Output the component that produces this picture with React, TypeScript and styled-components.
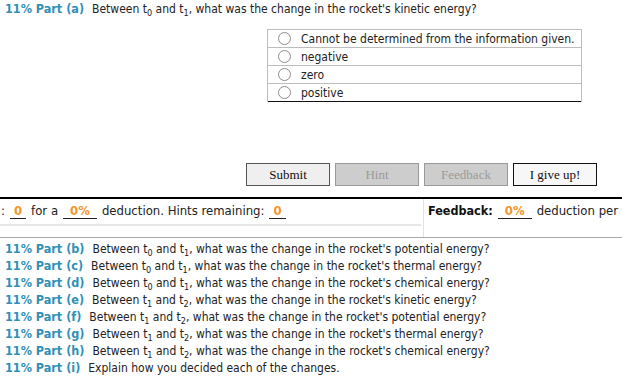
import React from 'react';
import styled, { createGlobalStyle } from 'styled-components';

const GlobalStyle = createGlobalStyle`
  body {
    margin: 0;
    background: #fff;
    font-family: 'DejaVu Sans Condensed', 'DejaVu Sans', sans-serif;
    font-size: 12px;
    color: #222;
  }
`;

type Part = { id: string; from: string; to: string; text: string };

const laterParts: Part[] = [
  { id: 'b', from: '0', to: '1', text: "what was the change in the rocket's potential energy?" },
  { id: 'c', from: '0', to: '1', text: "what was the change in the rocket's thermal energy?" },
  { id: 'd', from: '0', to: '1', text: "what was the change in the rocket's chemical energy?" },
  { id: 'e', from: '1', to: '2', text: "what was the change in the rocket's kinetic energy?" },
  { id: 'f', from: '1', to: '2', text: "what was the change in the rocket's potential energy?" },
  { id: 'g', from: '1', to: '2', text: "what was the change in the rocket's thermal energy?" },
  { id: 'h', from: '1', to: '2', text: "what was the change in the rocket's chemical energy?" },
];

const options = [
  'Cannot be determined from the information given.',
  'negative',
  'zero',
  'positive',
];

const Between = ({ from, to }: { from: string; to: string }) => (
  <>
    Between t<Sub>{from}</Sub> and t<Sub>{to}</Sub>,{' '}
  </>
);

export default function App() {
  return (
    <Page>
      <GlobalStyle />
      <PartRow>
        <Label>11% Part (a)</Label>
        <Question>
          <Between from="0" to="1" />
          what was the change in the rocket's kinetic energy?
        </Question>
      </PartRow>

      <Options>
        {options.map((o, i) => (
          <OptionRow key={o} last={i === options.length - 1}>
            <RadioCell>
              <Radio />
            </RadioCell>
            <OptionText>{o}</OptionText>
          </OptionRow>
        ))}
      </Options>

      <Buttons>
        <Button>Submit</Button>
        <Button disabled>Hint</Button>
        <Button disabled>Feedback</Button>
        <Button strong>I give up!</Button>
      </Buttons>

      <StatusBar>
        <StatusLeft>
          <StatusLine>
            :<Value>0</Value>for a<Value wide>0%</Value>deduction. Hints remaining:<Value>0</Value>
          </StatusLine>
          <Divider />
        </StatusLeft>
        <StatusRight>
          <StatusLine>
            <b>Feedback:</b>
            <Value wide>0%</Value>deduction per feedback.
          </StatusLine>
        </StatusRight>
      </StatusBar>

      <PartList>
        {laterParts.map((p) => (
          <PartRow key={p.id}>
            <Label>11% Part ({p.id})</Label>
            <Question>
              <Between from={p.from} to={p.to} />
              {p.text}
            </Question>
          </PartRow>
        ))}
        <PartRow>
          <Label>11% Part (i)</Label>
          <Question>Explain how you decided each of the changes.</Question>
        </PartRow>
      </PartList>
    </Page>
  );
}

const Page = styled.div`
  width: 622px;
  height: 380px;
  overflow: hidden;
`;

const PartRow = styled.div`
  display: flex;
  align-items: baseline;
  gap: 8px;
  height: 17px;
  line-height: 17px;
  padding-left: 5px;
  white-space: nowrap;
`;

const Label = styled.span`
  color: #2f8fb6;
  font-weight: bold;
  font-size: 12.5px;
`;

const Question = styled.span`
  color: #222;
`;

const Sub = styled.sub`
  font-size: 9px;
  vertical-align: -3px;
  line-height: 0;
`;

const Options = styled.div`
  margin: 12px 0 0 267px;
  width: 313px;
  border: 1px solid #bdbdbd;
  border-bottom: none;
`;

const OptionRow = styled.div<{ last?: boolean }>`
  display: flex;
  align-items: center;
  height: 17px;
  border-bottom: 1px solid ${(p) => (p.last ? '#111' : '#bdbdbd')};
`;

const RadioCell = styled.div`
  width: 33px;
  display: flex;
  justify-content: center;
`;

const Radio = styled.span`
  width: 11px;
  height: 11px;
  border-radius: 50%;
  border: 1px solid #8c8c8c;
  background: #fff;
`;

const OptionText = styled.span`
  color: #222;
`;

const Buttons = styled.div`
  display: flex;
  justify-content: flex-end;
  gap: 5px;
  margin-top: 61px;
  padding-right: 25px;
`;

const Button = styled.button<{ strong?: boolean }>`
  width: 84px;
  height: 23px;
  padding: 0;
  font-family: 'Liberation Serif', 'Times New Roman', serif;
  font-size: 13px;
  font-weight: normal;
  color: #111;
  background: ${(p) => (p.strong ? '#f7f7f7' : '#efefef')};
  border: 1px solid ${(p) => (p.strong ? '#111' : '#555')};

  &:disabled {
    background: #cdcdcd;
    border-color: #9a9a9a;
    color: #9a9a9a;
  }
`;

const StatusBar = styled.div`
  display: grid;
  grid-template-columns: 423px 1fr;
  margin-top: 11px;
  height: 38px;
  border-top: 2px solid #000;
  border-bottom: 1px solid #a8a8a8;
  white-space: nowrap;
`;

const StatusLeft = styled.div`
  display: flex;
  flex-direction: column;
  padding-right: 2px;
`;

const StatusRight = styled.div`
  border-left: 1px solid #e3e3e3;
  padding-left: 3px;
  overflow: hidden;
`;

const StatusLine = styled.div`
  display: flex;
  align-items: baseline;
  height: 25px;
  line-height: 23px;
  padding-left: 1px;
  font-size: 13px;
  color: #222;

  b {
    font-size: 12.5px;
    color: #111;
  }
`;

const Value = styled.span<{ wide?: boolean }>`
  display: inline-block;
  margin: 0 5px;
  padding: 0 ${(p) => (p.wide ? '7px' : '4px')};
  line-height: 14px;
  color: #f0962a;
  font-weight: bold;
  border-bottom: 1px solid #222;
`;

const Divider = styled.div`
  height: 2px;
  background: #e6e6e6;
`;

const PartList = styled.div`
  padding-top: 2px;
`;
